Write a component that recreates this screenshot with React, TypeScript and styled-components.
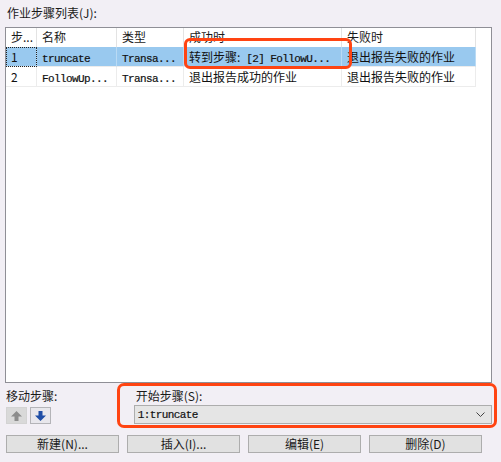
import React from 'react';
import styled, { createGlobalStyle } from 'styled-components';

const GlobalStyle = createGlobalStyle`
  html, body {
    margin: 0;
    padding: 0;
    background: #f2eff5;
  }
  body {
    font-family: "Noto Sans CJK SC", "Noto Sans", sans-serif;
    font-size: 12px;
    color: #1a1a1a;
  }
`;

const columns = '31px 80px 67px 158px 134px';

const Page = styled.div`
  width: 501px;
  height: 462px;
  box-sizing: border-box;
  padding: 0 4px 0 5px;
  display: flex;
  flex-direction: column;
  overflow: hidden;
`;

const Title = styled.div`
  height: 27px;
  line-height: 25px;
  padding-left: 2px;
`;

const ListBox = styled.div`
  position: relative;
  height: 356px;
  margin-right: 5px;
  box-sizing: border-box;
  border: 1px solid #8f8f96;
  background: #fff;
`;

const HeaderRow = styled.div`
  display: grid;
  grid-template-columns: ${columns} 1fr;
  height: 19px;
`;

const HeaderCell = styled.div`
  box-sizing: border-box;
  border-right: 1px solid #e3e3e3;
  padding-left: 5px;
  line-height: 17px;
  white-space: nowrap;
  overflow: hidden;

  &:last-child {
    border-right: none;
  }
`;

const Row = styled.div`
  display: grid;
  grid-template-columns: ${columns};
  height: 20px;
`;

const Cell = styled.div<{ $selected?: boolean; $focused?: boolean }>`
  box-sizing: border-box;
  border-right: 1px solid ${(p) => (p.$selected ? '#b9daf4' : '#ececec')};
  border-bottom: 1px solid #ececec;
  background: ${(p) => (p.$selected ? '#99c9ef' : 'transparent')};
  padding-left: 5px;
  line-height: 19px;
  white-space: nowrap;
  overflow: hidden;
  color: #111;
  ${(p) => p.$focused && 'outline: 1px dotted #222; outline-offset: -1px;'}
`;

const Mono = styled.span`
  font-family: "Liberation Mono", "DejaVu Sans Mono", monospace;
  font-size: 11px;
  letter-spacing: -0.6px;
  color: #111;
  -webkit-text-stroke: 0.2px #111;
`;

const Callout = styled.div`
  position: absolute;
  left: 178px;
  top: 10px;
  width: 168px;
  height: 31px;
  box-sizing: border-box;
  border: 3px solid #ff4412;
  border-radius: 6px;
  pointer-events: none;
`;

const BottomArea = styled.div`
  display: flex;
  height: 45px;
`;

const MoveColumn = styled.div`
  width: 111px;
  padding-left: 1px;
  display: flex;
  flex-direction: column;
`;

const MoveLabel = styled.div`
  margin-top: 4px;
  height: 18px;
  line-height: 18px;
`;

const ArrowRow = styled.div`
  display: flex;
  gap: 3px;
  margin-top: 2px;
`;

const ArrowButton = styled.div<{ $disabled?: boolean }>`
  width: 21px;
  height: 17px;
  box-sizing: border-box;
  display: flex;
  align-items: center;
  justify-content: center;
  border: 1px solid ${(p) => (p.$disabled ? '#d3d3d3' : '#b4b4b8')};
  background: ${(p) => (p.$disabled ? '#d9d9d9' : '#e8e7ec')};
`;

const StartPanel = styled.div`
  width: 381px;
  box-sizing: border-box;
  border: 3px solid #ff4412;
  border-radius: 7px;
  padding-left: 14px;
  padding-right: 2px;
  display: flex;
  flex-direction: column;
`;

const StartLabel = styled.div`
  height: 19px;
  line-height: 20px;
  padding-left: 2px;
`;

const Combo = styled.div`
  height: 19px;
  box-sizing: border-box;
  border: 1px solid #adadad;
  background: #e5e5e5;
  display: flex;
  align-items: center;
  justify-content: space-between;
  padding: 0 6px 0 3px;
`;

const ButtonRow = styled.div`
  display: flex;
  gap: 8px;
  margin-top: 7px;
  padding-left: 1px;
`;

const Button = styled.div`
  width: 113px;
  height: 18px;
  box-sizing: border-box;
  border: 1px solid #adadad;
  background: #e1e1e1;
  display: flex;
  align-items: center;
  justify-content: center;
  line-height: 16px;
`;

const UpArrow = ({ color }: { color: string }) => (
  <svg width="11" height="10" viewBox="0 0 11 10">
    <path d="M5.5 0 L11 5.5 L7.5 5.5 L7.5 10 L3.5 10 L3.5 5.5 L0 5.5 Z" fill={color} />
  </svg>
);

const DownArrow = ({ color }: { color: string }) => (
  <svg width="11" height="10" viewBox="0 0 11 10">
    <path d="M5.5 10 L11 4.5 L7.5 4.5 L7.5 0 L3.5 0 L3.5 4.5 L0 4.5 Z" fill={color} />
  </svg>
);

const Chevron = () => (
  <svg width="9" height="5" viewBox="0 0 9 5">
    <polyline points="0.5,0.5 4.5,4.5 8.5,0.5" fill="none" stroke="#444" strokeWidth="1" />
  </svg>
);

type Step = {
  id: string;
  name: string;
  type: string;
  success: React.ReactNode;
  failure: string;
};

const steps: Step[] = [
  {
    id: '1',
    name: 'truncate',
    type: 'Transa...',
    success: (
      <>
        转到步骤:<Mono> [2] FollowU...</Mono>
      </>
    ),
    failure: '退出报告失败的作业',
  },
  {
    id: '2',
    name: 'FollowUp...',
    type: 'Transa...',
    success: '退出报告成功的作业',
    failure: '退出报告失败的作业',
  },
];

export default function App() {
  return (
    <Page>
      <GlobalStyle />
      <Title>作业步骤列表(J):</Title>
      <ListBox>
        <HeaderRow>
          <HeaderCell>步...</HeaderCell>
          <HeaderCell>名称</HeaderCell>
          <HeaderCell>类型</HeaderCell>
          <HeaderCell>成功时</HeaderCell>
          <HeaderCell>失败时</HeaderCell>
          <HeaderCell />
        </HeaderRow>
        {steps.map((step, i) => {
          const selected = i === 0;
          return (
            <Row key={step.id}>
              <Cell $selected={selected} $focused={selected}>
                {step.id}
              </Cell>
              <Cell $selected={selected}>
                <Mono>{step.name}</Mono>
              </Cell>
              <Cell $selected={selected}>
                <Mono>{step.type}</Mono>
              </Cell>
              <Cell $selected={selected}>{step.success}</Cell>
              <Cell $selected={selected}>{step.failure}</Cell>
            </Row>
          );
        })}
        <Callout />
      </ListBox>
      <BottomArea>
        <MoveColumn>
          <MoveLabel>移动步骤:</MoveLabel>
          <ArrowRow>
            <ArrowButton $disabled>
              <UpArrow color="#8c8c8c" />
            </ArrowButton>
            <ArrowButton>
              <DownArrow color="#1f4ea6" />
            </ArrowButton>
          </ArrowRow>
        </MoveColumn>
        <StartPanel>
          <StartLabel>开始步骤(S):</StartLabel>
          <Combo>
            <Mono>1:truncate</Mono>
            <Chevron />
          </Combo>
        </StartPanel>
      </BottomArea>
      <ButtonRow>
        <Button>新建(N)...</Button>
        <Button>插入(I)...</Button>
        <Button>编辑(E)</Button>
        <Button>删除(D)</Button>
      </ButtonRow>
    </Page>
  );
}
